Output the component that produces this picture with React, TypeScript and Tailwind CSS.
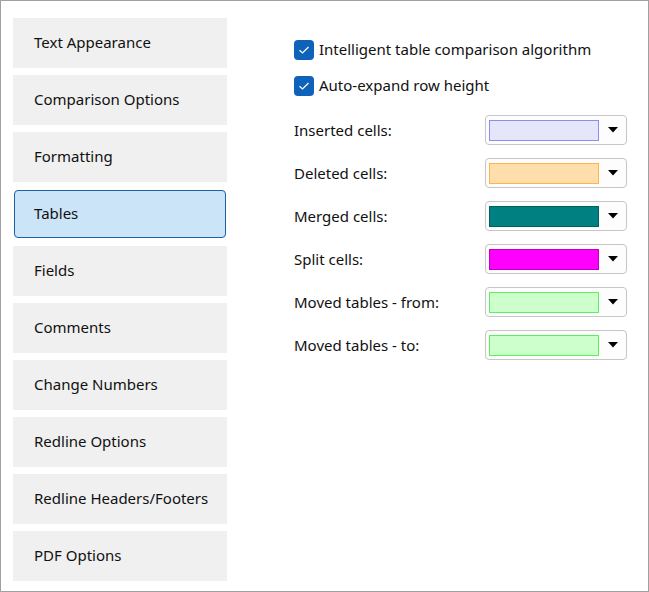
import React from "react";

const items = [
  "Text Appearance",
  "Comparison Options",
  "Formatting",
  "Tables",
  "Fields",
  "Comments",
  "Change Numbers",
  "Redline Options",
  "Redline Headers/Footers",
  "PDF Options",
];

const rows: { label: string; fill: string; border: string }[] = [
  { label: "Inserted cells:", fill: "bg-[#e6e6fa]", border: "border-[#8c8cf5]" },
  { label: "Deleted cells:", fill: "bg-[#ffdeac]", border: "border-[#ffb54a]" },
  { label: "Merged cells:", fill: "bg-[#008080]", border: "border-[#006060]" },
  { label: "Split cells:", fill: "bg-[#ff00ff]", border: "border-[#c000c0]" },
  { label: "Moved tables - from:", fill: "bg-[#ccffcc]", border: "border-[#5cf05c]" },
  { label: "Moved tables - to:", fill: "bg-[#ccffcc]", border: "border-[#5cf05c]" },
];

function Check({ label }: { label: string }) {
  return (
    <div className="flex items-center h-[20px]">
      <div className="w-[20px] h-[20px] rounded-[4px] bg-[#0f62b9] flex items-center justify-center">
        <svg width="12" height="10" viewBox="0 0 12 10">
          <path d="M1.5 5.2 L4.5 8 L10.5 2" fill="none" stroke="white" strokeWidth="1.2" />
        </svg>
      </div>
      <span className="ml-[5px] pb-[2px] text-[15px] text-[#111]">{label}</span>
    </div>
  );
}

export default function App() {
  return (
    <div
      className="w-[649px] h-[592px] border border-[#a0a0a0] bg-white flex"
      style={{ fontFamily: '"Noto Sans", "Open Sans", sans-serif' }}
    >
      <div className="pl-[12px] pt-[17px] flex flex-col gap-[7px]">
        {items.map((it) =>
          it === "Tables" ? (
            <div key={it} className="w-[214px] h-[50px] p-[1px]">
              <div className="h-full w-full rounded-[4px] border border-[#1a5fa8] bg-[#cce4f7] flex items-center pl-[19px] pb-[2px] text-[15px] text-[#111]">
                {it}
              </div>
            </div>
          ) : (
            <div
              key={it}
              className="w-[214px] h-[50px] bg-[#f0f0f0] flex items-center pl-[21px] pb-[2px] text-[15px] text-[#111]"
            >
              {it}
            </div>
          )
        )}
      </div>
      <div className="pl-[67px] pt-[39px] flex flex-col">
        <div className="flex flex-col gap-[16px]">
          <Check label="Intelligent table comparison algorithm" />
          <Check label="Auto-expand row height" />
        </div>
        <div className="mt-[19px] flex flex-col gap-[13px]">
          {rows.map((r) => (
            <div key={r.label} className="flex items-center h-[30px]">
              <span className="w-[191px] text-[15px] text-[#111]">{r.label}</span>
              <div className="w-[142px] h-[30px] border border-[#c6c6c6] rounded-[4px] bg-[#fdfdfd] flex items-center pl-[3px]">
                <div className={`w-[110px] h-[21px] border ${r.border} ${r.fill}`} />
                <svg className="ml-[9px]" width="10" height="6" viewBox="0 0 10 6">
                  <path d="M0 0 L10 0 L5 5.5 Z" fill="#000" />
                </svg>
              </div>
            </div>
          ))}
        </div>
      </div>
    </div>
  );
}
